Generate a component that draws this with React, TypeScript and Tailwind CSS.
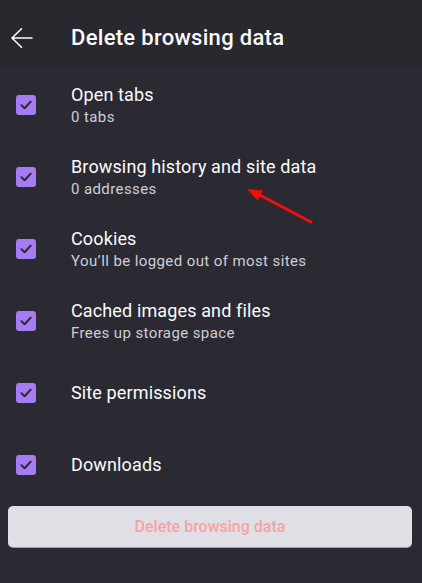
import React from "react";

const items: { title: string; sub?: string }[] = [
  { title: "Open tabs", sub: "0 tabs" },
  { title: "Browsing history and site data", sub: "0 addresses" },
  { title: "Cookies", sub: "You\u2019ll be logged out of most sites" },
  { title: "Cached images and files", sub: "Frees up storage space" },
  { title: "Site permissions" },
  { title: "Downloads" },
];

function Check() {
  return (
    <div className="w-5 h-5 rounded-[3px] bg-[#a57cf4] flex items-center justify-center shrink-0">
      <svg width="14" height="14" viewBox="0 0 14 14" fill="none">
        <path d="M2.5 7.2 L5.6 10.2 L11.6 3.8" stroke="#2b2a33" strokeWidth="2" strokeLinecap="round" strokeLinejoin="round" />
      </svg>
    </div>
  );
}

export default function App() {
  return (
    <div
      className="relative w-[422px] h-[583px] bg-[#2b2a33] overflow-hidden"
      style={{ fontFamily: "Roboto, 'Noto Sans', sans-serif" }}
    >
      <div className="h-[68px] bg-[#29282f] flex items-center pt-2">
        <div className="w-[71px] pl-[11px] flex items-center">
          <svg width="22" height="20" viewBox="0 0 22 20" fill="none">
            <path d="M1 10 H21 M10.5 0.8 L1 10 L10.5 19.2" stroke="#fbfbfe" strokeWidth="1.6" strokeLinecap="round" strokeLinejoin="round" />
          </svg>
        </div>
        <div className="text-[22px] tracking-[0.3px] font-medium text-[#fbfbfe] leading-none">Delete browsing data</div>
      </div>
      <div className="pt-px">
        {items.map((it) => (
          <div key={it.title} className="h-[72px] flex items-center">
            <div className="w-[71px] pl-4 flex items-center">
              <Check />
            </div>
            <div className="flex flex-col">
              <div className="text-[18px] tracking-[0.13px] leading-6 text-[#fbfbfe]">{it.title}</div>
              {it.sub && <div className="text-[15px] tracking-[0.4px] leading-5 text-[#cfced6]">{it.sub}</div>}
            </div>
          </div>
        ))}
      </div>
      <div className="pl-2 pr-[10px] pt-[5px]">
        <div className="h-[41px] rounded-[5px] bg-[#e0dfe5] flex items-center justify-center text-[16px] font-medium text-[#f7a3a3] shadow-[0_1px_0_#9f9ea6]">
          Delete browsing data
        </div>
      </div>
      <svg className="absolute left-0 top-0 pointer-events-none" width="422" height="583" viewBox="0 0 422 583">
        <line x1="311" y1="222" x2="256" y2="193" stroke="#f50d0d" strokeWidth="3" strokeLinecap="round" />
        <polygon points="247,189 263,190.5 257.5,200.5" fill="#f50d0d" />
      </svg>
    </div>
  );
}
